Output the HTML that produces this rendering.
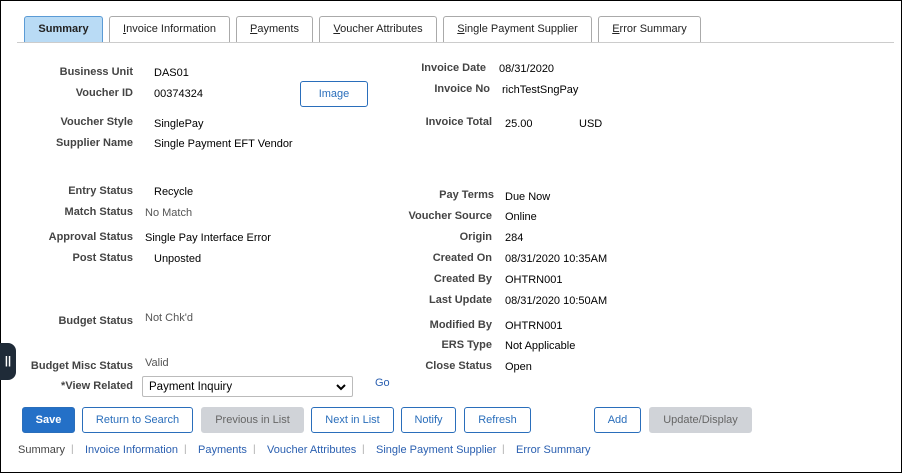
<!DOCTYPE html>
<html><head><style>
body{margin:0;width:902px;height:473px;overflow:hidden;background:#fff;font-family:"Liberation Sans",Arial,sans-serif;font-size:11px;color:#000;position:relative}
.frame{position:absolute;left:0;top:0;width:900px;height:471px;border:1px solid #000}
.a{position:absolute;white-space:nowrap}
.l{position:absolute;white-space:nowrap;color:#444;font-weight:bold;text-align:right}
.tab{position:absolute;top:16px;height:26px;border:1px solid #aaa;border-bottom:none;border-radius:3px 3px 0 0;background:#fff;box-sizing:border-box;text-align:center;line-height:25px;color:#222;font-size:11px}
.tab u{text-decoration:underline}
.btn{position:absolute;top:407px;height:26px;border:1px solid #2a6ebb;border-radius:3px;box-sizing:border-box;text-align:center;line-height:24px;color:#2a6ebb;background:#fff}
.lk{position:absolute;top:444px;color:#2a5fb0;white-space:nowrap}
.sep{position:absolute;top:444px;color:#aaa;font-size:10px}
</style></head><body>
<div class="frame"></div>
<div class="a" style="left:17px;top:42px;width:877px;height:1px;background:#ccc"></div>
<div class="tab" style="left:24px;width:79px;background:#b9dbf5;border-color:#5b9bd5;font-weight:bold">Summary</div>
<div class="tab" style="left:109px;width:121px"><u>I</u>nvoice Information</div>
<div class="tab" style="left:236px;width:77px"><u>P</u>ayments</div>
<div class="tab" style="left:319px;width:118px"><u>V</u>oucher Attributes</div>
<div class="tab" style="left:443px;width:149px"><u>S</u>ingle Payment Supplier</div>
<div class="tab" style="left:598px;width:103px"><u>E</u>rror Summary</div>

<div class="l" style="right:769px;top:66px">Business Unit</div><div class="a" style="left:154px;top:67px">DAS01</div>
<div class="l" style="right:769px;top:87px">Voucher ID</div><div class="a" style="left:154px;top:88px">00374324</div>
<div class="a" style="left:300px;top:81px;width:66px;height:24px;border:1px solid #2a6ebb;border-radius:3px;text-align:center;line-height:24px;color:#2a6ebb">Image</div>
<div class="l" style="right:769px;top:116px">Voucher Style</div><div class="a" style="left:154px;top:118px">SinglePay</div>
<div class="l" style="right:769px;top:137px">Supplier Name</div><div class="a" style="left:154px;top:138px">Single Payment EFT Vendor</div>

<div class="l" style="right:769px;top:185px">Entry Status</div><div class="a" style="left:154px;top:186px">Recycle</div>
<div class="l" style="right:769px;top:206px">Match Status</div><div class="a" style="left:145px;top:207px;color:#555">No Match</div>
<div class="l" style="right:769px;top:231px">Approval Status</div><div class="a" style="left:145px;top:232px">Single Pay Interface Error</div>
<div class="l" style="right:769px;top:252px">Post Status</div><div class="a" style="left:154px;top:253px">Unposted</div>
<div class="l" style="right:769px;top:315px">Budget Status</div><div class="a" style="left:145px;top:312px;color:#555">Not Chk'd</div>
<div class="l" style="right:769px;top:360px">Budget Misc Status</div><div class="a" style="left:145px;top:357px;color:#555">Valid</div>
<div class="l" style="right:769px;top:380px">*View Related</div>
<div class="a" style="left:142px;top:376px;width:211px;border:1px solid #bbb;border-radius:2px;line-height:20px;padding-left:6px;box-sizing:border-box;height:21px;font-size:11.5px">Payment Inquiry<svg style="position:absolute;right:6px;top:6px" width="10" height="8" viewBox="0 0 10 8"><path d="M1 2 L5 6 L9 2" stroke="#000" stroke-width="2" fill="none"/></svg></div>
<div class="a" style="left:375px;top:377px;color:#2a5fb0">Go</div>
<div class="a" style="left:0;top:343px;width:16px;height:37px;background:#1f2b38;border-radius:0 8px 8px 0;color:#fff;font-size:11px;line-height:37px;text-align:center;font-weight:bold">||</div>

<div class="l" style="right:416px;top:62px">Invoice Date</div><div class="a" style="left:499px;top:63px">08/31/2020</div>
<div class="l" style="right:412px;top:83px">Invoice No</div><div class="a" style="left:502px;top:84px">richTestSngPay</div>
<div class="l" style="right:410px;top:116px">Invoice Total</div><div class="a" style="left:505px;top:118px">25.00</div><div class="a" style="left:579px;top:118px">USD</div>
<div class="l" style="right:408px;top:189px">Pay Terms</div><div class="a" style="left:505px;top:191px">Due Now</div>
<div class="l" style="right:410px;top:210px">Voucher Source</div><div class="a" style="left:505px;top:211px">Online</div>
<div class="l" style="right:410px;top:231px">Origin</div><div class="a" style="left:505px;top:232px">284</div>
<div class="l" style="right:410px;top:252px">Created On</div><div class="a" style="left:505px;top:253px">08/31/2020 10:35AM</div>
<div class="l" style="right:410px;top:273px">Created By</div><div class="a" style="left:505px;top:274px">OHTRN001</div>
<div class="l" style="right:410px;top:294px">Last Update</div><div class="a" style="left:505px;top:295px">08/31/2020 10:50AM</div>
<div class="l" style="right:410px;top:319px">Modified By</div><div class="a" style="left:505px;top:320px">OHTRN001</div>
<div class="l" style="right:410px;top:339px">ERS Type</div><div class="a" style="left:505px;top:340px">Not Applicable</div>
<div class="l" style="right:410px;top:360px">Close Status</div><div class="a" style="left:505px;top:361px">Open</div>

<div class="btn" style="left:22px;width:53px;background:#2470c7;color:#fff;font-weight:bold">Save</div>
<div class="btn" style="left:82px;width:111px">Return to Search</div>
<div class="btn" style="left:201px;width:103px;background:#d0d3d8;border-color:#d0d3d8;color:#666">Previous in List</div>
<div class="btn" style="left:311px;width:83px">Next in List</div>
<div class="btn" style="left:401px;width:55px">Notify</div>
<div class="btn" style="left:464px;width:67px">Refresh</div>
<div class="btn" style="left:594px;width:47px">Add</div>
<div class="btn" style="left:649px;width:103px;background:#d0d3d8;border-color:#d0d3d8;color:#666">Update/Display</div>

<div class="lk" style="left:18px;color:#444">Summary</div><div class="sep" style="left:71px">|</div>
<div class="lk" style="left:85px">Invoice Information</div><div class="sep" style="left:184px">|</div>
<div class="lk" style="left:198px">Payments</div><div class="sep" style="left:253px">|</div>
<div class="lk" style="left:267px">Voucher Attributes</div><div class="sep" style="left:362px">|</div>
<div class="lk" style="left:376px">Single Payment Supplier</div><div class="sep" style="left:502px">|</div>
<div class="lk" style="left:516px">Error Summary</div>
</body></html>
